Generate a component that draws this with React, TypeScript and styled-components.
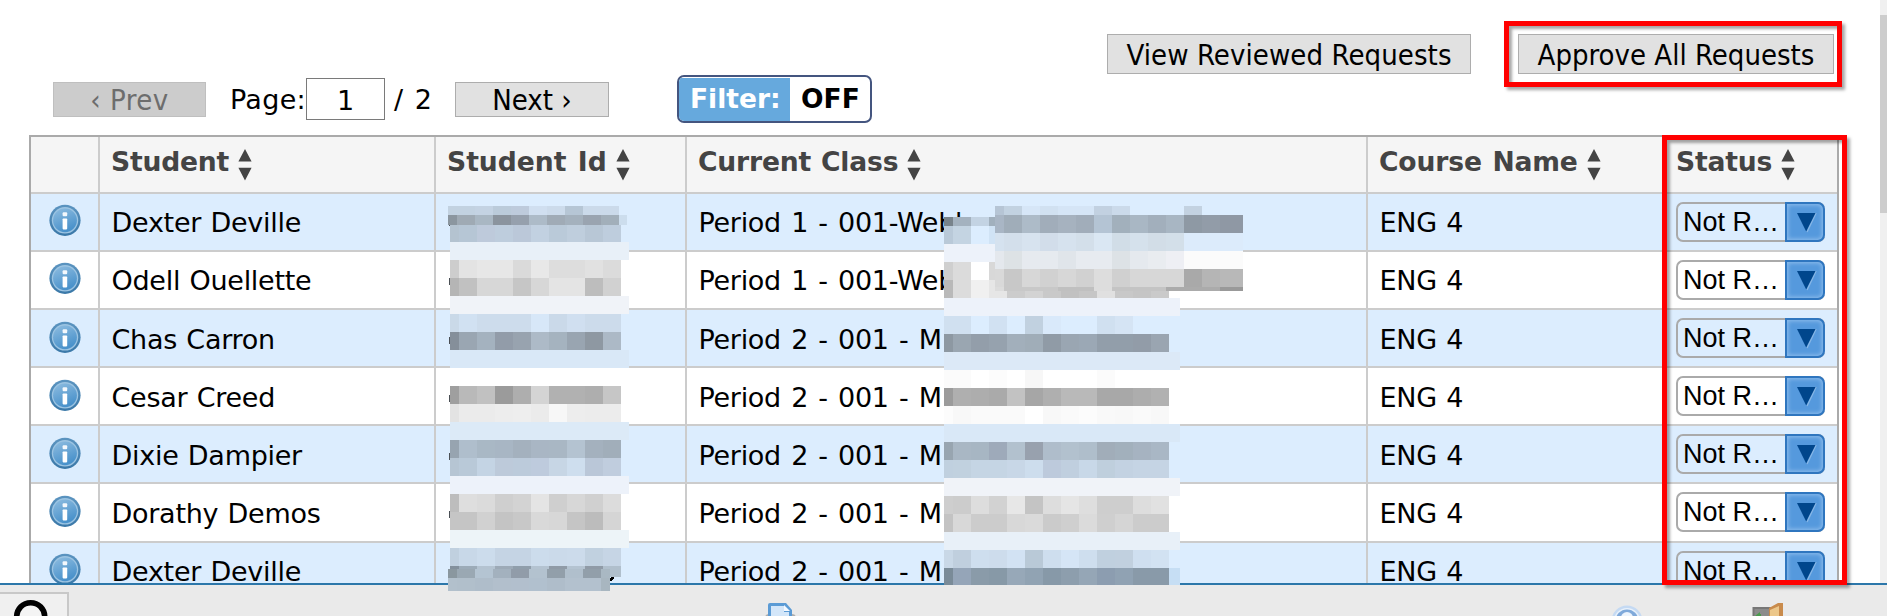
import React from 'react';
import styled, { createGlobalStyle } from 'styled-components';

const verdana = `"DejaVu Sans", sans-serif`;
const tahoma = `"DejaVu Sans Condensed", "DejaVu Sans", sans-serif`;

const Global = createGlobalStyle`
  * { box-sizing: border-box; }
  html, body { margin: 0; padding: 0; overflow: hidden; background: #fff; }
`;

const Page = styled.div`
  position: relative;
  width: 1887px;
  height: 616px;
  overflow: hidden;
  display: flex;
  flex-direction: column;
  font-family: ${verdana};
  color: #000;
`;
const Main = styled.div`
  height: 583px;
  display: flex;
  overflow: hidden;
`;
const Content = styled.div`
  width: 1880px;
  height: 583px;
  overflow: hidden;
`;
const ScrollTrack = styled.div`
  width: 7px;
  height: 583px;
  padding-top: 15px;
  background: #f0f0f0;
`;
const ScrollThumb = styled.div`
  height: 198px;
  background: #cdcdcd;
`;

const Actions = styled.div`
  height: 75px;
  padding: 34px 46px 0 0;
  display: flex;
  justify-content: flex-end;
  gap: 47px;
`;
const Button = styled.button<{ $w: number; $h: number; $ls?: number; $off?: boolean }>`
  width: ${p => p.$w}px;
  height: ${p => p.$h}px;
  flex: none;
  padding: 2px 0 0;
  border: 1px solid ${p => (p.$off ? '#bfbfbf' : '#adadad')};
  border-radius: 0;
  background: ${p => (p.$off ? '#cccccc' : '#e1e1e1')};
  color: ${p => (p.$off ? '#6d6d6d' : '#000')};
  font-family: ${tahoma};
  font-size: 29px;
  letter-spacing: ${p => p.$ls ?? 0}px;
  line-height: ${p => p.$h - 4}px;
  white-space: pre;
`;

const Pager = styled.div`
  height: 48px;
  margin: 0 0 12px 53px;
  display: flex;
  align-items: center;
  font-size: 27px;
  white-space: pre;
`;
const PageLabel = styled.span`
  width: 77px;
  padding: 2px 0 0 1px;
  margin-left: 23px;
  letter-spacing: 0.3px;
  line-height: 46px;
`;
const PageInput = styled.div`
  width: 79px;
  height: 42px;
  border: 1px solid #7a7a7a;
  text-align: center;
  line-height: 43px;
`;
const PageTotal = styled.span`
  width: 61px;
  padding-top: 2px;
  margin-left: 9px;
  word-spacing: 3px;
  line-height: 46px;
`;
const Filter = styled.div`
  width: 195px;
  height: 48px;
  margin-left: 68px;
  border: 2px solid #44557f;
  border-radius: 7px;
  overflow: hidden;
  display: flex;
  padding-top: 1px;
  font-weight: bold;
  font-size: 26.5px;
  line-height: 41px;
`;
const FilterLabel = styled.span`
  width: 111px;
  padding-left: 11px;
  background: #66a9dd;
  color: #fff;
`;
const FilterValue = styled.span`
  padding-left: 11px;
`;

const Table = styled.div`
  width: 1810px;
  margin-left: 29px;
  border: 2px solid #aaa;
  border-bottom: 0;
`;
const columns = '69px 336px 251px 681px 297px 172px';
const HeadRow = styled.div`
  display: grid;
  grid-template-columns: ${columns};
  height: 57px;
  background: #f5f5f5;
  border-bottom: 2px solid #ccc;
`;
const Row = styled.div<{ $odd: boolean; $h: number; $shift: number }>`
  display: grid;
  grid-template-columns: ${columns};
  height: ${p => p.$h}px;
  background: ${p => (p.$odd ? '#dcedfe' : '#fff')};
  border-bottom: 2px solid #ccc;
  --shift: ${p => p.$shift}px;
`;
const Cell = styled.div`
  border-right: 2px solid #ccc;
  padding: calc(1px + var(--shift)) 0 0 11.5px;
  font-size: 27px;
  line-height: 55px;
  letter-spacing: -0.27px;
  word-spacing: 1px;
  white-space: pre;
`;
const ClassCell = styled(Cell)`
  letter-spacing: -0.3px;
  word-spacing: 2px;
`;
const IconCell = styled(Cell)`
  padding: calc(10px + var(--shift)) 0 0 18px;
  line-height: 0;
`;
const StatusCell = styled(Cell)`
  border-right: 0;
  padding: 8px 0 0 11px;
`;
const HeadCell = styled.div<{ $ls: number; $ws: number; $gap: number; $last?: boolean }>`
  border-right: ${p => (p.$last ? 0 : 2)}px solid #ccc;
  padding: 0 0 0 11px;
  display: flex;
  gap: ${p => p.$gap}px;
  color: #444;
  font-weight: bold;
  font-size: 26.6px;
  line-height: 50px;
  letter-spacing: ${p => p.$ls}px;
  word-spacing: ${p => p.$ws}px;
  white-space: pre;
  svg { margin-top: 12px; }
`;

const Select = styled.div`
  width: 149px;
  height: 40px;
  display: flex;
  border: 2px solid #aaa;
  border-right: 0;
  border-radius: 7px;
  font-family: "Liberation Sans", Arial, sans-serif;
  font-size: 27px;
  letter-spacing: 0;
  word-spacing: 0;
  line-height: 36px;
`;
const SelectText = styled.span`
  width: 107px;
  padding-left: 5px;
`;
const SelectButton = styled.span`
  width: 40px;
  height: 40px;
  margin-top: -2px;
  flex: none;
  border: 2px solid #2f76bf;
  border-radius: 0 7px 7px 0;
  background: #5599dd;
  box-shadow: inset 0 0 4px 1px #8fbdec;
  display: flex;
  padding: 9px 0 0 10px;
`;

const Footer = styled.div`
  height: 33px;
  border-top: 2px solid #2c77aa;
  background: #eaeaea;
  display: flex;
  overflow: hidden;
`;
const SearchTile = styled.div`
  width: 69px;
  height: 40px;
  margin-top: 7px;
  border: 2px solid #c8c8c8;
  border-left: 0;
  background: #f0f0f0;
  padding: 5px 0 0 12px;
`;
const FooterIcon = styled.div<{ $gap: number }>`
  margin-left: ${p => p.$gap}px;
  padding-top: 17px;
  line-height: 0;
`;

const Highlight = styled.div<{ $x: number; $y: number; $w: number; $h: number }>`
  position: absolute;
  left: ${p => p.$x}px;
  top: ${p => p.$y}px;
  width: ${p => p.$w}px;
  height: ${p => p.$h}px;
  border: 5px solid #f00;
  box-shadow: 3px 3px 3px rgba(0, 0, 0, 0.35), inset 3px 3px 3px rgba(0, 0, 0, 0.35);
`;
const Mosaic = styled.svg`
  position: absolute;
  left: 440px;
  top: 200px;
  width: 810px;
  height: 395px;
`;

const SortIcon = () => (
  <svg width="14" height="32" viewBox="0 0 14 32">
    <path d="M7 0L13.6 12.6H0.4ZM0.4 18.8H13.6L7 31.4Z" fill="#444" />
  </svg>
);

const InfoIcon = () => (
  <svg width="32" height="33" viewBox="0 0 32 33">
    <defs>
      <linearGradient id="infoRing" x1="0" y1="0" x2="0" y2="1">
        <stop offset="0" stopColor="#5b94c0" />
        <stop offset="1" stopColor="#3a78a8" />
      </linearGradient>
      <linearGradient id="infoFill" x1="0" y1="0" x2="0.4" y2="1">
        <stop offset="0" stopColor="#8fbde0" />
        <stop offset="1" stopColor="#4a92cb" />
      </linearGradient>
    </defs>
    <circle cx="16" cy="16.3" r="15.6" fill="url(#infoRing)" />
    <circle cx="16" cy="16.3" r="13.2" fill="#9cc4e2" />
    <circle cx="16" cy="16.3" r="11.9" fill="url(#infoFill)" />
    <rect x="13.6" y="8.2" width="4.6" height="4" rx="1" fill="#f4f8fc" />
    <rect x="13.6" y="14.4" width="4.6" height="11" rx="0.8" fill="#fff" />
  </svg>
);

type Band = [number, number, number[], string];
const idA = [450, 459, 477, 495, 513, 531, 549, 567, 585, 603, 621];
const idB = [448, 457, 475, 493, 511, 529, 547, 565, 583, 601, 619, 627];
const idC = [448, 457, 475, 493, 511, 529, 547, 565, 583, 601, 610];
const idWide = [450, 629];
const clA = [944, 953, 971, 989, 1007, 1025, 1043, 1061, 1079, 1097, 1115, 1133, 1151, 1169, 1180];
const clB = [995, 1004, 1022, 1040, 1058, 1076, 1094, 1112, 1130, 1148, 1166, 1184, 1202, 1220, 1243];
const clLeft = [944, 953, 971, 989, 995];
const clWide = [944, 1180];

// Each band: top, bottom, column edges, one colour per column ('-' leaves a gap).
const bands: Band[] = [
  [206, 215, idB, 'c2d2e1 c2d2e1 c4d3e3 bbcbda becbdc d0dff0 ccdbeb b6c6d5 cbdaea cbdaea'],
  [215, 225, idB, '8b969f 9faab4 a9b7c3 8b949e 96a0ad adbbc8 a0abb6 a4b1bd 9aa4b0 a2afba ccdded'],
  [225, 242, idA, 'b4c3d0 b6c6d5 becadb becddd bbc8d9 c2d1e1 bacad9 bfcedd b8c7d6 becddd'],
  [242, 260, idWide, 'e8f0f8'],
  [260, 278, idA, 'cdcdcd e3e3e3 e7e7e7 e7e7e7 dadada e8e8e8 dddddd dddddd e1e1e1 dbdbdb'],
  [278, 296, idA, 'b5b5b5 c1c1c1 d7d7d7 d7d7d7 c6c6c6 d7d7d7 e4e4e4 e4e4e4 bdbdbd d1d1d1'],
  [296, 314, idWide, 'f0f3f8'],
  [314, 332, idA, 'cad9e8 d1e1f2 cddcec cddcec cddcec d7e7f8 cad9e9 d0dff0 ccdbeb ccdbeb'],
  [332, 350, idA, '858f9a 9aa6b2 a4b2bf 929ca9 98a3af adbac7 a5b3bf 99a5b1 8e98a2 acb9c6'],
  [350, 368, idWide, 'd9e8f7'],
  [368, 386, idA, 'fff fff fff fff fff fff fff fff fff fff'],
  [386, 404, idA, '9f9f9f b9b9b9 c1c1c1 9b9b9b aeaeae d4d4d4 b1b1b1 b1b1b1 aeaeae c6c6c6'],
  [404, 422, idA, 'e3e3e3 ebebeb ebebeb ededed eeeeee ebebeb f7f7f7 ededed ececec ececec'],
  [422, 440, idWide, 'dceaf7'],
  [440, 458, idA, '97a4b0 afbecc a9b8c5 a8b6c4 a4b1be a9b6c4 a9b7c4 b4c3d1 a4b1be a1aeba'],
  [458, 476, idA, 'b6c5d3 b9c9d8 c4d4e4 bdcada bccbdb becbdd c7d6e5 cedeee bac7d8 c0cdde'],
  [476, 494, idWide, 'edf2fa'],
  [494, 512, idA, 'bdbdbd dedede dbdbdb cfcfcf d3d3d3 e4e4e4 cfcfcf d7d7d7 d0d0d0 dcdcdc'],
  [512, 530, idA, 'c5c5c5 c5c5c5 d1d1d1 c4c4c4 c8c8c8 d9d9d9 d7d7d7 c5c5c5 bcbcbc d5d5d5'],
  [530, 548, idWide, 'edf4f8'],
  [548, 566, idA, 'c0d0df c8d8e8 ccdcec c5d4e4 c5d4e4 ccdcec cbdaea ccdbeb c1d1e0 c6d5e5'],
  [566, 577, idA, '83909c 9cabb8 b4c3d1 9daab7 909eab b4c3d1 909ba7 b4c3d1 909ba7 b0bfcc'],
  [569, 578, idC, '8a979f 9aa8b3 b4c4d2 a3b1be 919ca9 b3c2cf 929faa b0bfcc 929faa a9b8c3'],
  [578, 591, idC, 'b2c0cc b1bfcb afbdca b2bfcc b2bfcd b1c0ce afbdca b3c1ce b3c1ce a8b6c0'],

  [217, 226, clLeft, '78838b a4b2bf c3d3e3 a1b0bd'],
  [226, 244, clLeft, 'b9c9d8 c4d4e2 dcedfe d0e3f5'],
  [244, 262, [944, 995], 'edf2fa'],
  [262, 280, clLeft, 'cfcfcf dbdbdb ffffff d8d8d8'],
  [280, 298, clLeft, 'b9b9b9 dcdcdc f0f0f0 e6e6e6'],
  [206, 215, clB, 'b6c5d5 c2d2e1 d6e6f7 d1e1f1 d5e5f6 d5e5f6 c2d1e1 cbdaea - - - c3d2e1'],
  [215, 233, clB, 'a9b6c5 a0adb9 adbbc8 a1adba a6b2bf a1adba b4c4d4 a2b0bc a9b7c4 a2afbc a8b6c3 8e99a4 929ca8 8f98a4'],
  [233, 251, clB, 'd5e2ef d3dfeb d7e3ef d2ddea d6e2ee d3dfea dae7f3 d1dde7 d5e1ec d2dde7 d3dfe9 dcebfb dcebfb dcebfb'],
  [251, 269, clB, 'e4e8ed dde2e5 e6eaef e6eaef e0e5ea e7ebf0 e7ebf0 dde2e6 e5e9ee e9ecf0 eeeff4 fbfbfb fbfbfb fbfbfb'],
  [269, 287, clB, 'd9d9d9 c8c8c8 d7d7d7 d1d1d1 d7d7d7 d1d1d1 dddddd d0d0d0 d7d7d7 d7d7d7 d7d7d7 a9a9a9 b5b5b5 b8b8b8'],
  [287, 291, clB, 'dcdcdc c8c8c8 d7d7d7 d1d1d1 d7d7d7 d1d1d1 dddddd d0d0d0 d7d7d7 d7d7d7 d7d7d7 a9a9a9 b5b5b5 999999'],
  [291, 298, clA, '- - - e6e6e6 cccccc d3d3d3 c9c9c9 c1c1c1 c6c6c6 e0e0e0 c8c8c8 c5c5c5 cacaca'],
  [287, 291, [1004, 1058, 1094, 1112, 1166, 1220, 1243], 'c8c8c8 c0c0c0 dddddd c4c4c4 ababab 999999'],
  [298, 316, clWide, 'edf2fa'],
  [316, 334, clA, 'd0e0f0 d0e0f0 dcedfe d1e1f2 dcedfe c1d1e0 d9e9fa dcedfe dcedfe d0e0f0 d5e4f4 dcedfe dcedfe'],
  [334, 352, clA, '8d98a2 9aa6b1 939eaa 96a2ae a2afbb a0adb8 909ba6 9aa6b2 9ba8b5 929eaa 929eaa 929ca8 9aa5b1'],
  [352, 370, clWide, 'dce9f7'],
  [370, 388, clA, 'fbfbfb fbfbfb ffffff fcfcfc ffffff f7f7f7 ffffff ffffff ffffff fbfbfb ffffff ffffff ffffff'],
  [388, 406, clA, '9b9b9b afafaf adadad aaaaaa c2c2c2 a6a6a6 afafaf b9b9b9 b9b9b9 a8a8a8 a8a8a8 adadad b1b1b1'],
  [406, 424, clA, 'fcfcfc f8f8f8 fafafa fafafa fafafa ffffff f8f8f8 fafafa fcfcfc f9f9f9 f8f8f8 fafafa f8f8f8'],
  [424, 442, clWide, 'd9e8f7'],
  [442, 460, clA, '98a5b0 a9b7c4 a7b6c3 9eaaba b2c1ce 98a1ae afbdcb b2c1ce afbecb a1adb9 a2b0bc a6b3c1 a9b7c5'],
  [460, 478, clA, 'c0d0df c1d1df c5d5e4 c5d5e4 c8d7e7 cddded bdcadc c0cfdf c8d8e8 bfcfdd c3d2e2 c5d4e4 c5d4e4'],
  [478, 496, clWide, 'f0f3f8'],
  [496, 514, clA, 'cecece cccccc dddddd d2d2d2 e7e7e7 c4c4c4 dddddd e5e5e5 dedede cecece cecece dddddd e1e1e1'],
  [514, 532, clA, 'c3c3c3 d8d8d8 cccccc cccccc d8d8d8 dadada cbcbcb cfcfcf dbdbdb cfcfcf d5d5d5 cccccc cccccc'],
  [532, 550, clWide, 'e8f0f8'],
  [550, 568, clA, 'c9d8e7 c0cfde cedeee cddcec d2e2f3 b9c9d7 cedeee d5e5f6 cedeee c0d0df c1d0df cfdff0 d2e2f2'],
  [568, 585, clA, '7a8b98 95a5b8 8a9ba9 8799a7 97a8b8 91a3b3 8799a8 8d9ead 95a6b6 8c9db0 90a2b3 899aa9 899aa9 c6def4'],
];

const Redaction = () => (
  <Mosaic viewBox="440 200 810 395" shapeRendering="crispEdges">
    {[224, 278, 337, 395, 453, 511].map(y => (
      <rect key={y} x="449" y={y} width="1" height={y === 224 ? 2 : 7} fill="#4a4f55" />
    ))}
    <path d="M610 581V578L612 577H614V578L611 581Z" fill="#000" />
    {bands.map(([top, bottom, edges, colours], b) =>
      colours.split(' ').map((c, i) =>
        c === '-' ? null : (
          <rect key={`${b}-${i}`} x={edges[i]} y={top} width={edges[i + 1] - edges[i]} height={bottom - top} fill={`#${c}`} />
        ),
      ),
    )}
  </Mosaic>
);

const heads = [
  { label: 'Student', ls: -0.2, ws: 0, gap: 9 },
  { label: 'Student Id', ls: 0, ws: 2, gap: 9 },
  { label: 'Current Class', ls: -0.2, ws: 1, gap: 9 },
  { label: 'Course Name', ls: -0.15, ws: 1.5, gap: 9 },
  { label: 'Status', ls: -0.2, ws: 0, gap: 9 },
];

const rows = [
  { name: 'Dexter Deville', period: 'Period 1 - 001-Webb', h: 58, shift: 0 },
  { name: 'Odell Ouellette', period: 'Period 1 - 001-Web', h: 58, shift: 0 },
  { name: 'Chas Carron', period: 'Period 2 - 001 - M', h: 58, shift: 1 },
  { name: 'Cesar Creed', period: 'Period 2 - 001 - M', h: 58, shift: 1 },
  { name: 'Dixie Dampier', period: 'Period 2 - 001 - M', h: 58, shift: 1 },
  { name: 'Dorathy Demos', period: 'Period 2 - 001 - M', h: 59, shift: 1 },
  { name: 'Dexter Deville', period: 'Period 2 - 001 - M', h: 58, shift: 0 },
];

const StatusSelect = () => (
  <Select>
    <SelectText>Not R…</SelectText>
    <SelectButton>
      <svg width="20" height="20" viewBox="0 0 20 20">
        <path d="M19 0L10 19" stroke="#86b6e6" strokeWidth="1.5" />
        <path d="M0 0H18.5L9.2 18.5Z" fill="#00468c" />
      </svg>
    </SelectButton>
  </Select>
);

export default function App() {
  return (
    <Page>
      <Global />
      <Main>
        <Content>
          <Actions>
            <Button $w={364} $h={40} $ls={0.08}>View Reviewed Requests</Button>
            <Button $w={316} $h={40}>Approve All Requests</Button>
          </Actions>
          <Pager>
            <Button $w={153} $h={35} $ls={0.5} $off>‹ Prev</Button>
            <PageLabel>Page:</PageLabel>
            <PageInput>1</PageInput>
            <PageTotal>/ 2</PageTotal>
            <Button $w={154} $h={35}>Next ›</Button>
            <Filter>
              <FilterLabel>Filter:</FilterLabel>
              <FilterValue>OFF</FilterValue>
            </Filter>
          </Pager>
          <Table>
            <HeadRow>
              <HeadCell $ls={0} $ws={0} $gap={0} />
              {heads.map((h, i) => (
                <HeadCell key={h.label} $ls={h.ls} $ws={h.ws} $gap={h.gap} $last={i === 4}>
                  {h.label}
                  <SortIcon />
                </HeadCell>
              ))}
            </HeadRow>
            {rows.map((r, i) => (
              <Row key={i} $odd={i % 2 === 0} $h={r.h} $shift={r.shift}>
                <IconCell><InfoIcon /></IconCell>
                <Cell>{r.name}</Cell>
                <Cell />
                <ClassCell>{r.period}</ClassCell>
                <Cell>ENG 4</Cell>
                <StatusCell><StatusSelect /></StatusCell>
              </Row>
            ))}
          </Table>
        </Content>
        <ScrollTrack><ScrollThumb /></ScrollTrack>
      </Main>
      <Footer>
        <SearchTile>
          <svg width="38" height="38" viewBox="0 0 38 38">
            <circle cx="18.7" cy="17.7" r="14" fill="#f4f4f4" stroke="#000" strokeWidth="5.6" />
          </svg>
        </SearchTile>
        <FooterIcon $gap={695}>
          <svg width="34" height="32" viewBox="0 0 34 32">
            <rect x="1" y="12" width="31" height="20" rx="4" fill="#adadad" />
            <path d="M4 30V3Q4 1 6 1H22L28 8V30Z" fill="#5b9bd5" />
            <path d="M7 30V4H20V10H25V30Z" fill="#d3e6f9" />
            <path d="M20 3V9H26Z" fill="#f4f9ff" />
          </svg>
        </FooterIcon>
        <FooterIcon $gap={813}>
          <svg width="32" height="36" viewBox="0 0 32 36">
            <circle cx="16" cy="19" r="15.4" fill="#c5daf3" />
            <circle cx="16" cy="19" r="13" fill="#e8f1fb" />
            <circle cx="16" cy="19" r="11.5" fill="#7fa9da" />
            <circle cx="16" cy="16" r="6" fill="#edf4fc" />
          </svg>
        </FooterIcon>
        <FooterIcon $gap={109}>
          <svg width="32" height="34" viewBox="0 0 32 34">
            <rect x="0.5" y="5" width="20" height="28" fill="#777" />
            <rect x="2.5" y="7" width="17" height="26" fill="#8c8c8c" />
            <path d="M3 14L8 10V12H9V16H3Z" fill="#4a9c4c" />
            <path d="M17 6L26 1H31V33H17Z" fill="#c98b4c" />
            <path d="M18 8L27 4V33H18Z" fill="#ecc78a" />
          </svg>
        </FooterIcon>
      </Footer>
      <Redaction />
      <Highlight $x={1504} $y={21} $w={338} $h={66} />
      <Highlight $x={1662} $y={135} $w={185} $h={450} />
    </Page>
  );
}
